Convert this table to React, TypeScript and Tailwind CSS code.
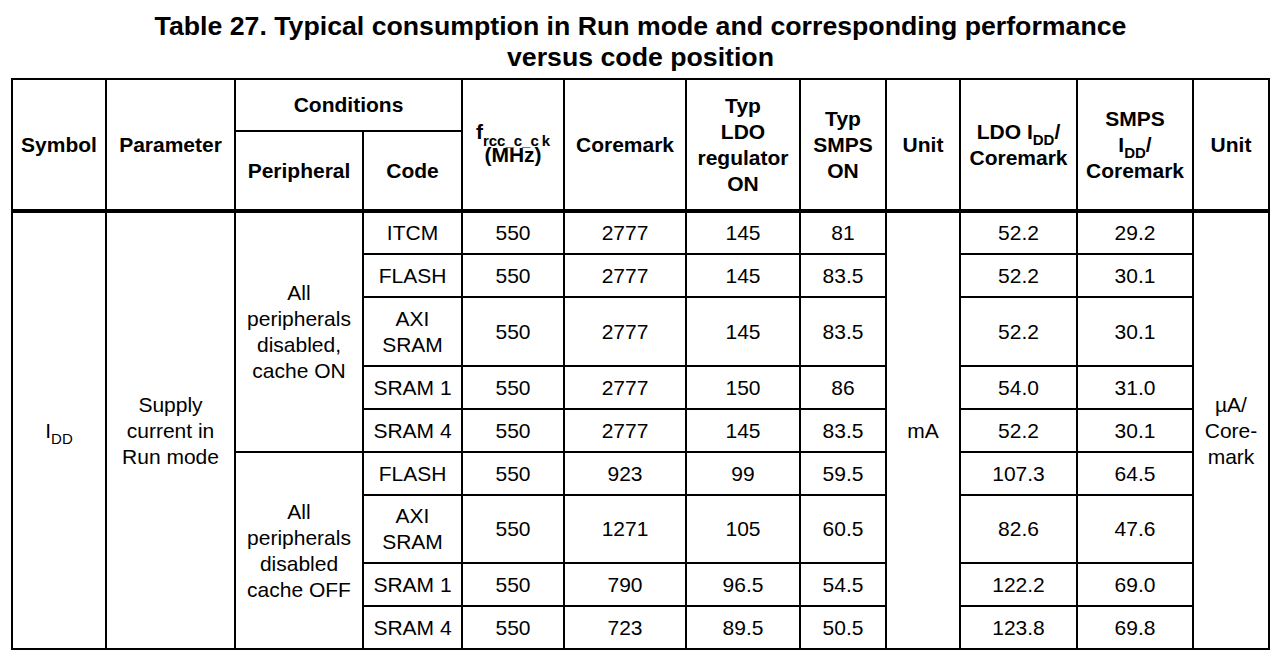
import React from "react";

type Row = {
  code: string[];
  f: string;
  coremark: string;
  ldo: string;
  smps: string;
  ldoPer: string;
  smpsPer: string;
};

const cacheOn: Row[] = [
  { code: ["ITCM"], f: "550", coremark: "2777", ldo: "145", smps: "81", ldoPer: "52.2", smpsPer: "29.2" },
  { code: ["FLASH"], f: "550", coremark: "2777", ldo: "145", smps: "83.5", ldoPer: "52.2", smpsPer: "30.1" },
  { code: ["AXI", "SRAM"], f: "550", coremark: "2777", ldo: "145", smps: "83.5", ldoPer: "52.2", smpsPer: "30.1" },
  { code: ["SRAM 1"], f: "550", coremark: "2777", ldo: "150", smps: "86", ldoPer: "54.0", smpsPer: "31.0" },
  { code: ["SRAM 4"], f: "550", coremark: "2777", ldo: "145", smps: "83.5", ldoPer: "52.2", smpsPer: "30.1" },
];

const cacheOff: Row[] = [
  { code: ["FLASH"], f: "550", coremark: "923", ldo: "99", smps: "59.5", ldoPer: "107.3", smpsPer: "64.5" },
  { code: ["AXI", "SRAM"], f: "550", coremark: "1271", ldo: "105", smps: "60.5", ldoPer: "82.6", smpsPer: "47.6" },
  { code: ["SRAM 1"], f: "550", coremark: "790", ldo: "96.5", smps: "54.5", ldoPer: "122.2", smpsPer: "69.0" },
  { code: ["SRAM 4"], f: "550", coremark: "723", ldo: "89.5", smps: "50.5", ldoPer: "123.8", smpsPer: "69.8" },
];

const cell = "border-2 border-black text-center align-middle px-1 py-0";
const head = cell + " font-bold";

const Idd = () => (
  <span>
    I<sub className="text-[15px] align-[-3px] leading-none">DD</sub>
  </span>
);

const Lines = ({ items }: { items: string[] }) => (
  <>
    {items.map((t, i) => (
      <div key={i}>{t}</div>
    ))}
  </>
);

const BodyRow = ({
  r,
  first,
  lead,
  tall = "h-[69px]",
}: {
  r: Row;
  first: boolean;
  lead?: React.ReactNode;
  tall?: string;
}) => {
  const c = cell + (first ? " border-t-4" : "");
  const h = r.code.length > 1 ? tall : "h-[43px]";
  return (
    <tr className={h}>
      {lead}
      <td className={c}>
        <Lines items={r.code} />
      </td>
      <td className={c}>{r.f}</td>
      <td className={c}>{r.coremark}</td>
      <td className={c}>{r.ldo}</td>
      <td className={c}>{r.smps}</td>
      {first && (
        <td rowSpan={9} className={c}>
          mA
        </td>
      )}
      <td className={c}>{r.ldoPer}</td>
      <td className={c}>{r.smpsPer}</td>
      {first && (
        <td rowSpan={9} className={c}>
          <Lines items={["µA/", "Core-", "mark"]} />
        </td>
      )}
    </tr>
  );
};

export default function App() {
  return (
    <div className="bg-white w-[1287px] h-[665px] font-[family-name:'Liberation_Sans',Arial,sans-serif] text-black">
      <div className="ml-[11px] w-[1259px] pt-[11px] text-center font-bold text-[26.7px] leading-[31px]">
        <div>Table 27. Typical consumption in Run mode and corresponding performance</div>
        <div>versus code position</div>
      </div>
      <table className="ml-[11px] mt-[5px] w-[1259px] table-fixed border-collapse border-2 border-black text-[21px] leading-[26px]">
        <colgroup>
          <col className="w-[94px]" />
          <col className="w-[129px]" />
          <col className="w-[128px]" />
          <col className="w-[99px]" />
          <col className="w-[102px]" />
          <col className="w-[122px]" />
          <col className="w-[114px]" />
          <col className="w-[86px]" />
          <col className="w-[74px]" />
          <col className="w-[117px]" />
          <col className="w-[116px]" />
          <col className="w-[76px]" />
        </colgroup>
        <thead>
          <tr className="h-[52px]">
            <th rowSpan={2} className={head}>Symbol</th>
            <th rowSpan={2} className={head}>Parameter</th>
            <th colSpan={2} className={head}>Conditions</th>
            <th rowSpan={2} className={head}>
              <div className="leading-[20px] -mt-[3px]">
                f
                <sub className="text-[15px] align-[-4px] leading-none">
                  rcc_c_c<span className="ml-[3px]">k</span>
                </sub>
              </div>
              <div className="leading-[20px]">(MHz)</div>
            </th>
            <th rowSpan={2} className={head}>Coremark</th>
            <th rowSpan={2} className={head}>
              <Lines items={["Typ", "LDO", "regulator", "ON"]} />
            </th>
            <th rowSpan={2} className={head}>
              <Lines items={["Typ", "SMPS", "ON"]} />
            </th>
            <th rowSpan={2} className={head}>Unit</th>
            <th rowSpan={2} className={head}>
              <div>
                LDO <Idd />/
              </div>
              <div>Coremark</div>
            </th>
            <th rowSpan={2} className={head}>
              <div>SMPS</div>
              <div>
                <Idd />/
              </div>
              <div>Coremark</div>
            </th>
            <th rowSpan={2} className={head}>Unit</th>
          </tr>
          <tr className="h-[80px]">
            <th className={head}>Peripheral</th>
            <th className={head}>Code</th>
          </tr>
        </thead>
        <tbody>
          {cacheOn.map((r, i) => (
            <BodyRow
              key={"on" + i}
              r={r}
              first={i === 0}
              lead={
                i === 0 ? (
                  <>
                    <td rowSpan={9} className={cell + " border-t-4"}>
                      <Idd />
                    </td>
                    <td rowSpan={9} className={cell + " border-t-4"}>
                      <Lines items={["Supply", "current in", "Run mode"]} />
                    </td>
                    <td rowSpan={5} className={cell + " border-t-4"}>
                      <Lines items={["All", "peripherals", "disabled,", "cache ON"]} />
                    </td>
                  </>
                ) : undefined
              }
            />
          ))}
          {cacheOff.map((r, i) => (
            <BodyRow
              key={"off" + i}
              r={r}
              first={false}
              tall="h-[68px]"
              lead={
                i === 0 ? (
                  <td rowSpan={4} className={cell}>
                    <Lines items={["All", "peripherals", "disabled", "cache OFF"]} />
                  </td>
                ) : undefined
              }
            />
          ))}
        </tbody>
      </table>
    </div>
  );
}
